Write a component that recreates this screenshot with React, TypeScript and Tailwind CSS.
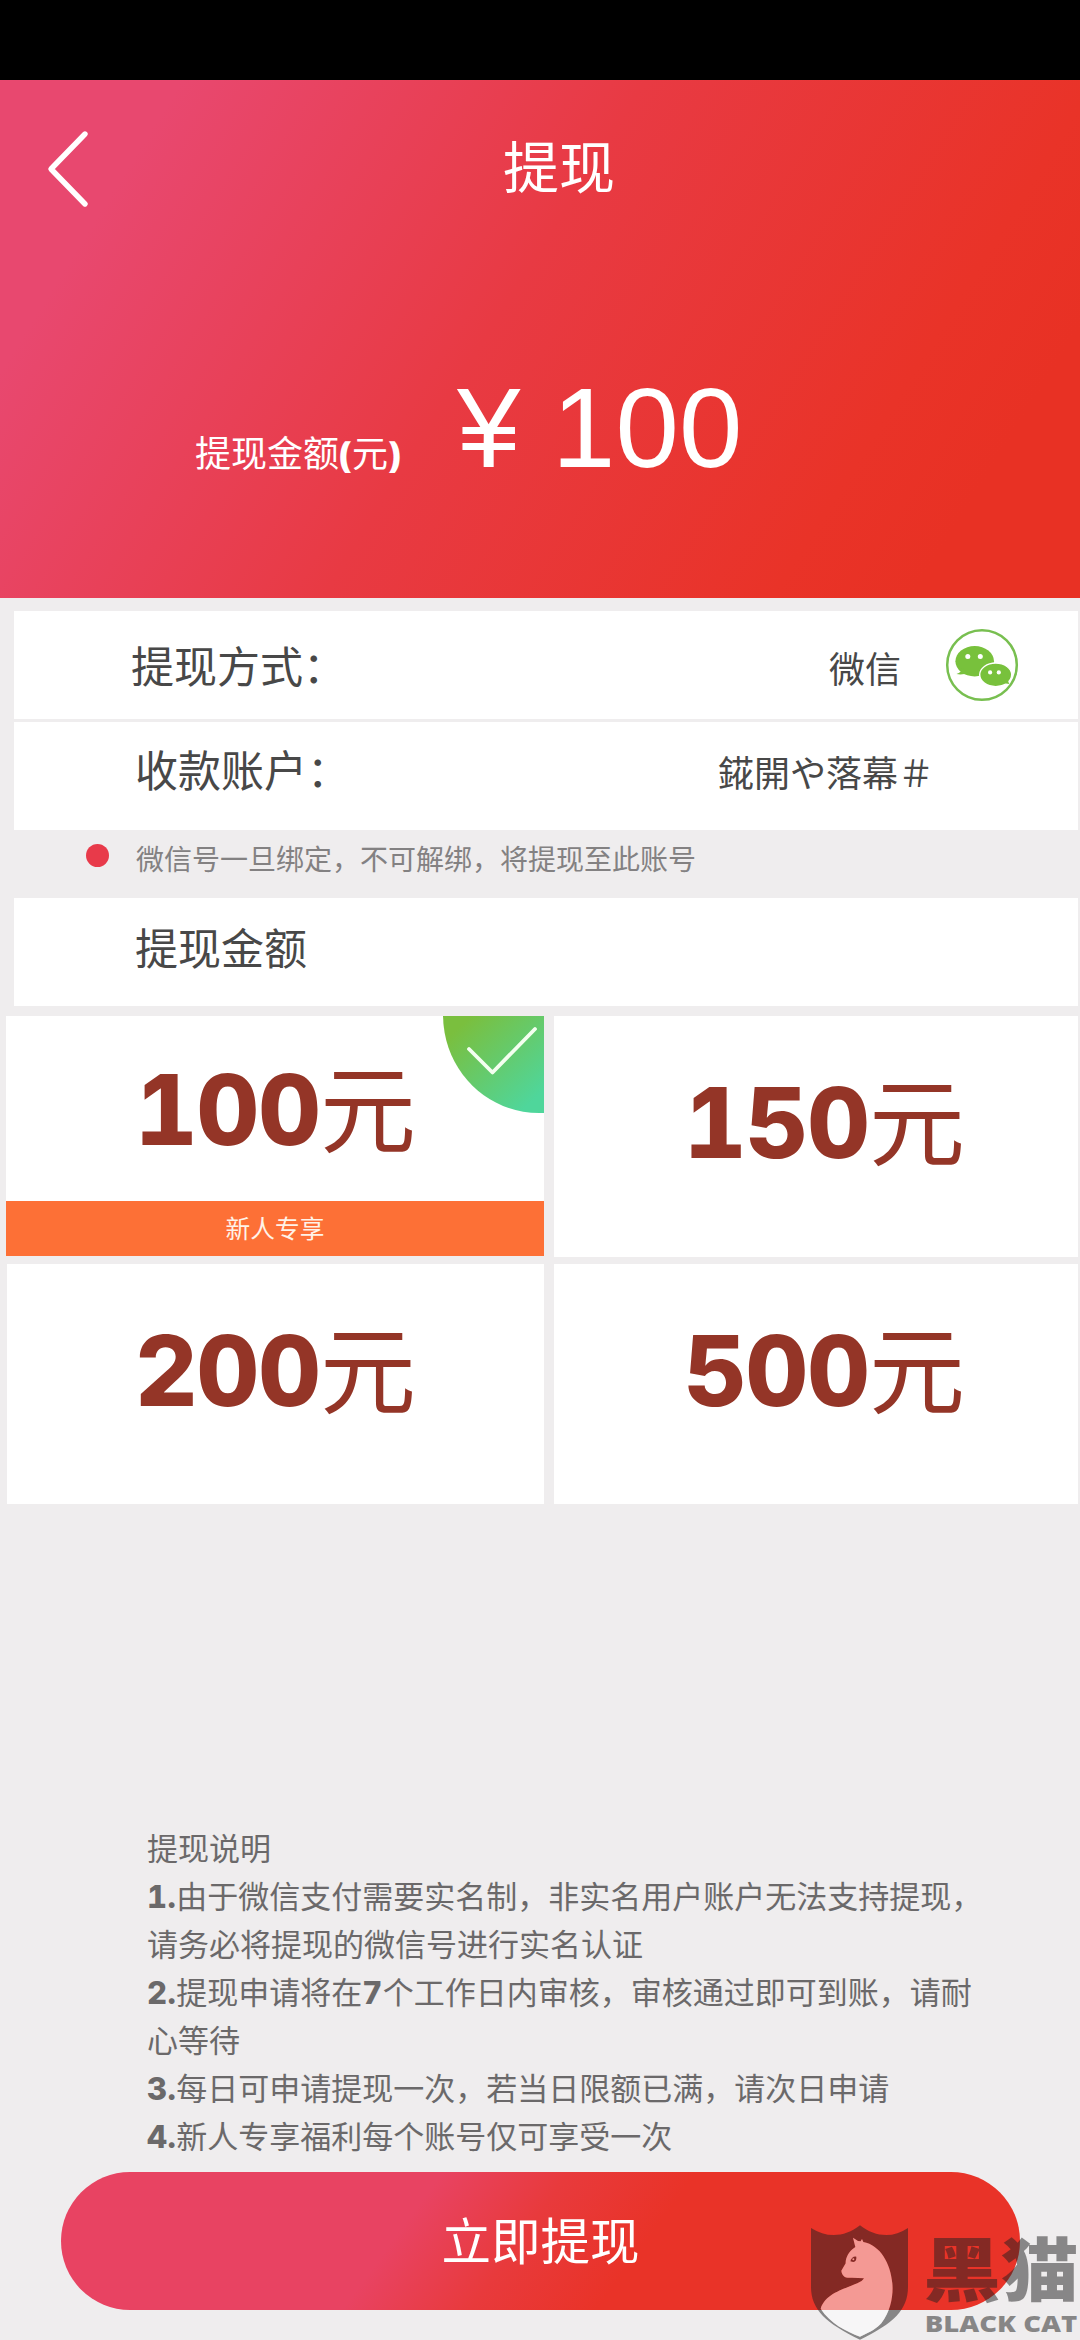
const CJK = "font-['Noto_Sans_CJK_SC',sans-serif]";

function WeChatIcon() {
  return (
    <svg viewBox="0 0 92 92" className="size-[92px]" fill="none">
      <circle cx="46" cy="46" r="34.800" stroke="#78bf50" strokeWidth="2.500" />
      <g fill="#78c13c">
        <ellipse cx="38.700" cy="42.300" rx="19.300" ry="15.200" />
        <path d="M26 49 C26 52 24 54 20.500 55 C25 56 29 55 32 54 Z" />
      </g>
      <ellipse cx="59.700" cy="55.800" rx="16" ry="11.800" fill="#78c13c" stroke="#fff" strokeWidth="1.400" />
      <path d="M66 64 C69 64 71 65 73.500 65 C72 63 72 61 72 59 Z" fill="#78c13c" />
      <g fill="#fff">
        <circle cx="31.800" cy="37.500" r="2.500" />
        <circle cx="44.300" cy="37.500" r="2.500" />
        <circle cx="54.100" cy="53.400" r="2.100" />
        <circle cx="62.800" cy="53.400" r="2.100" />
      </g>
    </svg>
  );
}

function SelectedBadge() {
  return (
    <svg viewBox="0 0 102 98" className="absolute right-0 top-0 h-[98px] w-[102px]" fill="none">
      <defs>
        <linearGradient id="badge" x1="0.1" y1="0" x2="0.95" y2="0.9">
          <stop offset="0.1" stopColor="#7abf3e" />
          <stop offset="0.95" stopColor="#4fd69b" />
        </linearGradient>
      </defs>
      <path d="M1 0 C2 56 46 97 97 97 L102 97 V0 Z" fill="url(#badge)" />
      <path d="M27 33 L50.500 56.500 L93 13" stroke="#f4fff0" strokeWidth="3.800" strokeLinecap="round" strokeLinejoin="round" />
    </svg>
  );
}

function Watermark() {
  return (
    <svg viewBox="0 0 900 570" className="absolute bottom-0 right-0 h-[190px] w-[300px]">
      <path
        fillRule="evenodd"
        fill="#1f1f1f"
        fillOpacity="0.5"
        d="M93 234 C140 265 195 262 240 226 C285 262 340 265 384 234 V410 C384 480 340 520 240 569 C140 520 93 480 93 410 Z M219 263 L226 291 C205 305 196 325 197 340 L184 362 C186 378 196 386 216 383 L252 385 C240 410 140 415 122 476 C150 520 200 545 240 560 C275 545 290 535 304 520 C335 480 340 430 337 400 C332 340 300 285 250 276 L246 267 L242 274 L234 273 Z"
      />
      <path
        fill="#ffffff"
        fillOpacity="0.5"
        d="M219 263 L226 291 C205 305 196 325 197 340 L184 362 C186 378 196 386 216 383 L252 385 C240 410 140 415 122 476 C150 520 200 545 240 560 C275 545 290 535 304 520 C335 480 340 430 337 400 C332 340 300 285 250 276 L246 267 L242 274 L234 273 Z"
      />
      <path d="M211 334 Q216 318 229 320 Q230 334 220 336 Z" fill="#842824" />
      <circle cx="220" cy="328" r="3" fill="#f59890" />
      <g fill="#1f1f1f" fillOpacity="0.5">
        <text x="430" y="438" fontSize="208" fontWeight="900" textLength="466" lengthAdjust="spacingAndGlyphs" className="font-['Noto_Sans_CJK_SC',sans-serif]">黑猫</text>
        <text x="434" y="547" fontSize="68" fontWeight="800" textLength="458" lengthAdjust="spacingAndGlyphs" className="font-['Open_Sans',sans-serif]">BLACK CAT</text>
      </g>
    </svg>
  );
}

function Amount({ value, className }: { value: string; className: string }) {
  return (
    <div className={`flex items-baseline leading-none text-[#943527] ${className}`}>
      <span className="w-[185px] pr-[2px] text-right font-['Inter',sans-serif] text-[97px] font-extrabold leading-none tabular-nums tracking-[-1px]">{value}</span>
      <span className="text-[96px] leading-none">元</span>
    </div>
  );
}

function Num({ children }: { children: string }) {
  return <span className="font-['Inter',sans-serif] font-extrabold tabular-nums tracking-[0.5px]">{children}</span>;
}

function Paren({ children }: { children: string }) {
  return <span className="font-['Open_Sans',sans-serif] font-extrabold">{children}</span>;
}

export default function App() {
  return (
    <div className={`relative flex h-[2340px] w-[1080px] flex-col overflow-hidden bg-[#efedee] whitespace-nowrap text-[#484848] ${CJK}`}>
      <div className="h-20 shrink-0 bg-black" />
      <header className="h-[518px] shrink-0 bg-[linear-gradient(122deg,#e8486f_13%,#e83a43_46%,#e93328_78%,#e83124_88%)] text-white">
        <div className="flex h-44 items-center pl-[46px]">
          <svg viewBox="0 0 44 80" className="h-20 w-11" fill="none" stroke="#fff" strokeWidth="5.400" strokeLinecap="round" strokeLinejoin="round">
            <path d="M39 6 L5 41 L39 76" />
          </svg>
          <h1 className="mb-2 ml-[413px] text-[56px] leading-none">提现</h1>
        </div>
        <div className="flex items-baseline pt-[115px] pl-[195px]">
          <span className="w-[262px] text-[36px] leading-none">
            提现金额<Paren>(</Paren>元<Paren>)</Paren>
          </span>
          <span className="font-['Liberation_Sans',sans-serif] text-[114px] leading-none">¥ 100</span>
        </div>
      </header>

      <main className="flex flex-col pt-[13px]">
        <section className="mr-[2px] ml-[14px] flex flex-col gap-[3px]">
          <div className="flex h-[108px] items-center bg-white pl-[117px] pr-[50px]">
            <span className="mb-[2px] text-[43px] leading-none">提现方式：</span>
            <span className="mt-[3px] ml-auto mr-[35px] text-[36px] leading-none">微信</span>
            <WeChatIcon />
          </div>
          <div className="flex h-[108px] items-center bg-white pl-[121px] pr-[144px] pb-[15px]">
            <span className="text-[43px] leading-none">收款账户：</span>
            <span className="mt-[5px] ml-auto text-[36px] leading-none">錵開や落幕＃</span>
          </div>
        </section>
        <div className="flex h-[68px] items-center pb-[13px] pl-[86px]">
          <span className="mr-[27px] mb-1 size-[23px] rounded-full bg-[#e83a4a]" />
          <span className="text-[28px] leading-none text-[#838182]">微信号一旦绑定，不可解绑，将提现至此账号</span>
        </div>
        <div className="mr-[2px] ml-[14px] flex h-[108px] items-center bg-white pb-[11px] pl-[121px]">
          <span className="text-[43px] leading-none">提现金额</span>
        </div>

        <section className="mt-[10px] mr-[2px] ml-[6px] grid grid-cols-[538px_524px] gap-x-[10px] gap-y-[7px]">
          <div className="relative flex h-[240px] flex-col bg-white">
            <Amount value="100" className="h-[185px] pt-[40px] pl-[129px]" />
            <SelectedBadge />
            <div className="flex h-[55px] items-center justify-center bg-[#fd7036] pb-0.5 text-[24.700px] leading-none text-[#fff3e8]">新人专享</div>
          </div>
          <div className="h-[241px] bg-white">
            <Amount value="150" className="pt-[53px] pl-[130px]" />
          </div>
          <div className="ml-[1px] h-[240px] bg-white">
            <Amount value="200" className="pt-[53px] pl-[128px]" />
          </div>
          <div className="h-[240px] bg-white">
            <Amount value="500" className="pt-[53px] pl-[130px]" />
          </div>
        </section>

        <section className="mt-[319px] flex h-[338px] flex-col pl-[147px] text-[31px] leading-[48px] text-[#6b696a] *:h-[48px]">
          <p>提现说明</p>
          <p><Num>1.</Num>由于微信支付需要实名制，非实名用户账户无法支持提现，</p>
          <p>请务必将提现的微信号进行实名认证</p>
          <p><Num>2.</Num>提现申请将在<Num>7</Num>个工作日内审核，审核通过即可到账，请耐</p>
          <p>心等待</p>
          <p><Num>3.</Num>每日可申请提现一次，若当日限额已满，请次日申请</p>
          <p><Num>4.</Num>新人专享福利每个账号仅可享受一次</p>
        </section>

        <button className="mt-[11px] ml-[61px] flex h-[138px] w-[959px] items-center justify-center rounded-full bg-[linear-gradient(126deg,#e84362_36%,#e83a3c_48%,#e93328_60%)] pb-1 text-[49.500px] leading-none text-white">
          立即提现
        </button>
      </main>
      <Watermark />
    </div>
  );
}
